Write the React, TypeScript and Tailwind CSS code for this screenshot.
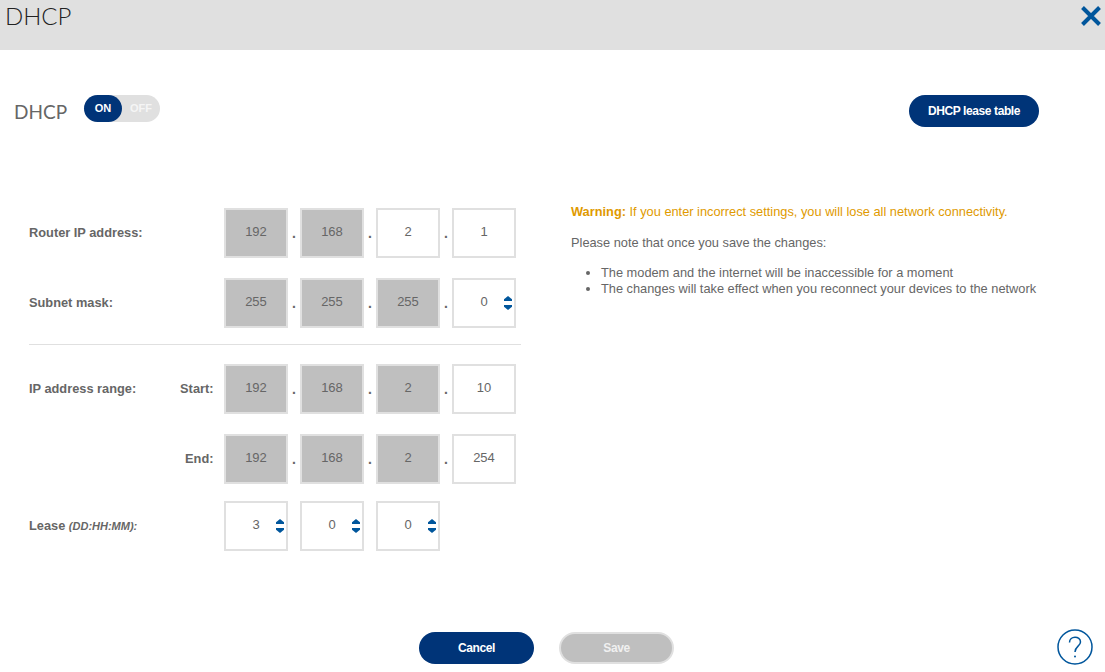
const disabledBox = 'bg-[#bfbfbf]'

function Spinner() {
  return (
    <svg className="absolute right-[2px] top-4" width="8" height="14" viewBox="0 0 8 14">
      <path d="M4 0 L8 3.2 V5 H0 V3.2 Z" fill="#00569c" />
      <path d="M0 9 H8 V10.8 L4 14 L0 10.8 Z" fill="#00569c" />
    </svg>
  )
}

function Box({ value, off, spin }: { value: string; off?: boolean; spin?: boolean }) {
  return (
    <div
      className={`relative flex h-[50px] w-16 items-center justify-center border-2 border-[#e0e0e0] pb-[2px] text-[13px] text-[#666] ${off ? disabledBox : 'bg-white'}`}
    >
      {value}
      {spin && <Spinner />}
    </div>
  )
}

function Dot() {
  return <span className="flex w-3 items-center justify-center text-[14px] font-bold text-[#666]">.</span>
}

function IpRow({ label, sub, values, editFrom, spin, className }: {
  label?: string
  sub?: string
  values: string[]
  editFrom: number
  spin?: boolean
  className?: string
}) {
  return (
    <div className={`flex items-center ${className ?? ''}`}>
      <div className="w-[120px] text-[12.8px] font-bold text-[#666]">{label}</div>
      <div className="w-[64.5px] text-right text-[12.8px] font-bold text-[#666]">{sub}</div>
      <div className="ml-[10.5px] flex">
        {values.map((v, i) => (
          <div key={i} className="flex">
            {i > 0 && <Dot />}
            <Box value={v} off={i < editFrom} spin={spin && i >= editFrom} />
          </div>
        ))}
      </div>
    </div>
  )
}

export default function App() {
  return (
    <div className="relative h-[672px] w-[1105px] overflow-hidden bg-white font-['Liberation_Sans',sans-serif]">
      <header className="flex h-[50px] items-start justify-between bg-[#e0e0e0] pr-1 pl-[5px]">
        <h1 className="font-['Lato',sans-serif] text-[24px] leading-[32px] font-light text-[#222]">DHCP</h1>
        <svg className="mt-[6px]" width="20" height="20" viewBox="0 0 20 20" stroke="#00569c" strokeWidth="4">
          <path d="M1.5 1.5 L18.5 18.5 M18.5 1.5 L1.5 18.5" />
        </svg>
      </header>

      <div className="mt-[45px] flex items-start justify-between pr-[66px] pl-[14px]">
        <div className="flex items-center">
          <span className="pt-[1px] font-['Lato',sans-serif] text-[19px] leading-[32px] text-[#666]">DHCP</span>
          <div className="-mt-[6px] ml-[17px] flex h-[27px] w-[76px] rounded-[14px] bg-[#e0e0e0] text-[11px] font-bold">
            <span className="flex w-[38px] items-center justify-center rounded-[14px] bg-[#003478] text-white">ON</span>
            <span className="flex w-[38px] items-center justify-center text-[#f5f5f5]">OFF</span>
          </div>
        </div>
        <button className="h-8 w-[130px] rounded-2xl bg-[#003478] text-[12px] font-bold tracking-[-0.4px] text-white">DHCP lease table</button>
      </div>

      <div className="mt-[80px] flex pl-[29px]">
        <div className="w-[492px]">
          <IpRow label="Router IP address:" values={['192', '168', '2', '1']} editFrom={2} />
          <IpRow label="Subnet mask:" values={['255', '255', '255', '0']} editFrom={3} spin className="mt-5" />
          <div className="mt-4 h-px bg-[#e0e0e0]" />
          <IpRow label="IP address range:" sub="Start:" values={['192', '168', '2', '10']} editFrom={3} className="mt-[19px]" />
          <IpRow sub="End:" values={['192', '168', '2', '254']} editFrom={3} className="mt-5" />
          <div className="mt-[17px] flex items-center">
            <div className="w-[195px] text-[12.8px] font-bold text-[#666]">
              Lease <i className="text-[11px]">(DD:HH:MM):</i>
            </div>
            <Box value="3" spin />
            <div className="w-3" />
            <Box value="0" spin />
            <div className="w-3" />
            <Box value="0" spin />
          </div>
        </div>

        <div className="ml-[50px] -mt-1 text-[12.8px] leading-[16px] text-[#666]">
          <p className="text-[#e09a00]"><b>Warning:</b> If you enter incorrect settings, you will lose all network connectivity.</p>
          <p className="mt-[15px]">Please note that once you save the changes:</p>
          <ul className="mt-[14px] list-disc pl-[30px]">
            <li>The modem and the internet will be inaccessible for a moment</li>
            <li>The changes will take effect when you reconnect your devices to the network</li>
          </ul>
        </div>
      </div>

      <div className="mt-[81px] flex justify-center gap-[25px] pr-3">
        <button className="h-8 w-[115px] rounded-2xl bg-[#003478] text-[12px] font-bold tracking-[-0.4px] text-white">Cancel</button>
        <button className="h-8 w-[115px] rounded-2xl border-2 border-[#e0e0e0] bg-[#bfbfbf] text-[12px] font-bold tracking-[-0.4px] text-[#f0f0f0]">Save</button>
      </div>

      <svg className="absolute right-[12px] bottom-[7px]" width="36" height="36" viewBox="0 0 36 36" fill="none" stroke="#00569c" strokeWidth="1.5">
        <circle cx="18" cy="18" r="17" />
        <path d="M12.5 13.5 C12.5 6.5 23.5 6.5 23.5 13 C23.5 17 18 17.5 18 23" />
        <circle cx="18" cy="27.5" r="1" fill="#00569c" stroke="none" />
      </svg>
    </div>
  )
}
